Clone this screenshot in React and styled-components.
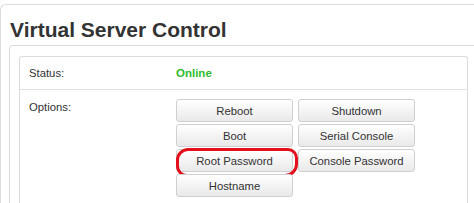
import React from "react";
import styled, { createGlobalStyle } from "styled-components";

const Global = createGlobalStyle`
  html, body { margin: 0; padding: 0; background: #fff; overflow: hidden; }
  body { font-family: "Liberation Sans", Arial, sans-serif; color: #333; }
`;

const Panel = styled.div`
  margin-top: 4px;
  width: 474px;
  height: 199px;
  border: 1px solid #dcdcdc;
  border-right: none;
  border-bottom: none;
  border-radius: 6px 0 0 0;
  padding: 13px 0 0 8px;
  box-sizing: border-box;
  overflow: hidden;
`;

const Title = styled.h2`
  margin: 0 0 3px 1px;
  font-size: 21px;
  line-height: 24px;
  font-weight: bold;
  color: #333;
`;

const Section = styled.div`
  border: 1px solid #dcdcdc;
  border-right: none;
  border-bottom: none;
  border-radius: 4px 0 0 0;
  padding: 10px 0 0 9px;
  height: 160px;
`;

const Table = styled.div`
  width: 449px;
  box-sizing: border-box;
  border: 1px solid #dcdcdc;
  border-bottom: none;
  border-radius: 3px 3px 0 0;
  height: 150px;
`;

const Row = styled.div`
  display: grid;
  grid-template-columns: 156px 1fr;
  align-items: ${(p) => (p.$top ? "start" : "center")};
  min-height: ${(p) => (p.$top ? "auto" : "32px")};
  border-top: ${(p) => (p.$first ? "none" : "1px solid #e2e2e2")};
`;

const Label = styled.div`
  font-size: 11.3px;
  line-height: 13px;
  padding: ${(p) => (p.$top ? "11px 9px 0" : "0 9px")};
  color: #333;
`;

const Status = styled.div`
  font-size: 11.5px;
  font-weight: bold;
  color: #2dbd2d;
`;

const Buttons = styled.div`
  display: grid;
  grid-template-columns: 117px 117px;
  column-gap: 5px;
  row-gap: 2px;
  padding: 9px 0 0;
`;

const Btn = styled.button`
  position: relative;
  height: 23px;
  padding: 0;
  border: 1px solid #cfcfcf;
  border-radius: 3px;
  background: linear-gradient(#ffffff, #e9e9e9);
  font-family: "Liberation Sans", Arial, sans-serif;
  font-size: 11.3px;
  color: #333;
  text-align: center;
`;

const Ring = styled.span`
  position: absolute;
  left: -1px;
  top: -2px;
  width: 122px;
  height: 29px;
  box-sizing: border-box;
  border: 3.5px solid #e3101c;
  border-radius: 12px 10px 13px 11px;
  pointer-events: none;
`;

const options = [
  "Reboot",
  "Shutdown",
  "Boot",
  "Serial Console",
  "Root Password",
  "Console Password",
  "Hostname",
];

export default function App() {
  return (
    <>
      <Global />
      <Panel>
        <Title>Virtual Server Control</Title>
        <Section>
          <Table>
            <Row $first>
              <Label>Status:</Label>
              <Status>Online</Status>
            </Row>
            <Row $top>
              <Label $top>Options:</Label>
              <Buttons>
                {options.map((o) => (
                  <Btn key={o}>
                    {o}
                    {o === "Root Password" && <Ring />}
                  </Btn>
                ))}
              </Buttons>
            </Row>
          </Table>
        </Section>
      </Panel>
    </>
  );
}
